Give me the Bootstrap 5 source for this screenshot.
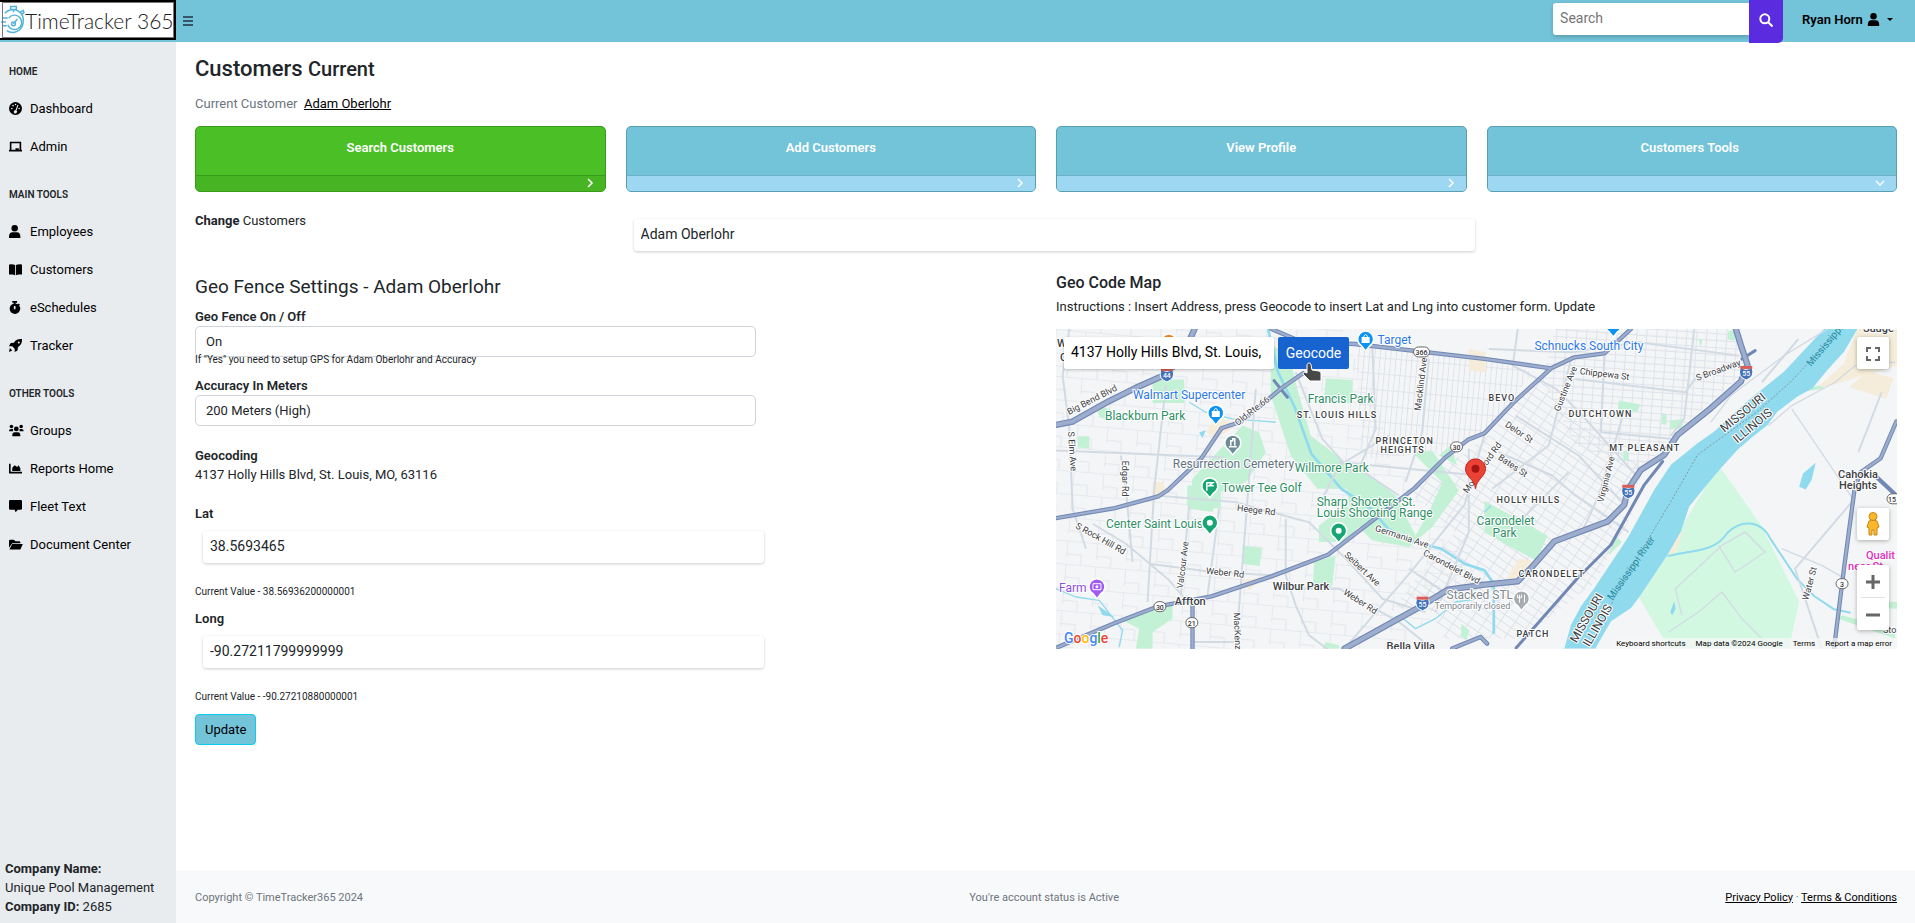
<!DOCTYPE html>
<html lang="en">
<head>
<meta charset="utf-8">
<meta name="viewport" content="width=device-width, initial-scale=1">
<title>TimeTracker 365 - Customers</title>
<link href="https://cdn.jsdelivr.net/npm/bootstrap@5.3.0/dist/css/bootstrap.min.css" rel="stylesheet">
<style>
:root{--sky:#73c3d9;--ink:#212529}
body{font-family:Roboto,"Liberation Sans",sans-serif;font-size:13px;line-height:19px;color:var(--ink);background:#fff}
.topbar{height:42px;background:var(--sky)}
.logo-box{width:176px;height:40px;border:2px solid #000;border-left:0;background:#fff;outline:1px solid #777;outline-offset:-3px;color:#222;font-family:Lato,sans-serif;font-weight:300;font-size:21px;padding-left:1px;white-space:nowrap}
.menu-btn{width:24px;color:#234}
.search-field{width:196px;height:32px;margin-top:3px;border:0;border-radius:3px 0 0 3px;font-size:14px;padding:0 7px 2px;box-shadow:0 2px 4px rgba(0,0,0,.2)}
.search-btn{width:34px;height:43px;border:0;border-radius:0 0 5px 0;background:#5b2be0;color:#fff}
.user-link{color:#000;font-weight:600;padding:0 22px 0 19px}
.side{width:176px;background:#e9ecef}
.side-head{font-size:10px;font-weight:600;padding:21px 9px 8px;line-height:18px}
.side a{height:38px;padding:0 9px;color:#000;gap:8px}
.side a svg,.user-link svg{fill:currentColor;width:13px;height:13px;overflow:visible}
.company{padding:0 5px 7px}
.page-main{padding:14px 18px 0 19px}
.page-main .row{--bs-gutter-x:20px}
h1{font-size:22px;line-height:26px;margin:0 0 12px}
h1 small{font-size:20px;font-weight:500}
h2{font-size:19px;line-height:23px;font-weight:400;margin:24px 0 9px}
h3{font-size:16px;line-height:20px;margin:22px 0 4px}
.tiles{margin-top:13px}
.tile{border:1px solid #589fb2;background:var(--sky);color:#fff;border-radius:5px;overflow:hidden}
.tile-top{height:48px;padding-top:11px;font-weight:600;text-align:center}
.tile-foot{height:16px;background:#9dd7f2;border-top:1px solid #6fafc8;padding:0 11px 2px 0}
.tile.go{background:#4bbf26;border-color:#399a1d}
.tile.go .tile-foot{background:#46b423;border-color:#399a1d}
.change-row{margin-top:19px}
.form-part{width:66.667%}
.flat-input{height:32px;width:100%;margin:8px 0 0 8px;border:0;border-radius:3px;background:#fff;color:var(--ink);padding:0 7px 2px;font-size:14px;box-shadow:0 1px 3px rgba(0,0,0,.2);appearance:none}
.pick{height:31px;font-size:13px;padding:0 10px;border-color:#ced4da;border-radius:5px;background-image:none;color:var(--ink)}
.hint{font-size:10px;line-height:15px;display:block}
.hint-tight{margin:-5px 0 9px}
.hint-after{margin:21px 0 10px}
.label-b{font-weight:600;display:block}
.btn-update{height:31px;font-size:13px;padding:0 9px;background:var(--sky);border:1px solid #0dcaf0;border-radius:4px;color:#000}
.foot{background:#f8f9fa;height:52px;padding:0 18px 0 19px;color:#6c757d;font-size:11px}
.foot a{color:#000}
.map-box{margin-top:13px;aspect-ratio:842/320;overflow:hidden;background:#f4f5f6}
.map-box>svg{width:100%;height:100%}
.map-search{left:8px;top:8px;gap:4px}
.map-search input{width:210px;height:32px;border:0;border-radius:2px;padding:0 7px 2px;font-size:14px;color:#000;background:#fff;box-shadow:0 1px 3px rgba(0,0,0,.24)}
.map-search button{width:71px;height:32px;border:0;border-radius:2px;background:#1763cf;color:#fff;font-size:14px;padding:0}
.cursor-hand{left:246px;top:33px}
.ctl{width:32px;background:#fff;border:0;border-radius:2px;box-shadow:0 1px 4px rgba(0,0,0,.3);right:8px;padding:0}
.ctl-full{top:8px;height:32px}
.ctl-man{top:179px;height:32px}
.ctl-zoom{top:236px;height:65px}
.ctl-zoom button{height:32px;border:0;background:none;padding:0}
.map-credit{right:0;bottom:0;height:11px;line-height:11px;font-size:8px;background:rgba(245,245,245,.75);color:#000;gap:10px;padding:0 5px}
.map-credit a{color:#000}
.lb{font:500 11px Roboto,sans-serif;fill:#3c4043;stroke:#fff;stroke-width:2px;paint-order:stroke;stroke-linejoin:round}
.park{fill:#2f8f66;font-weight:400;font-size:12px}
.shop{fill:#2b78e8;font-weight:400;font-size:12px}
.hood{font-size:9px;letter-spacing:1px}
.road{font-size:9px;font-weight:400}
.state-name{font-size:12px;font-weight:400}
.shield{font:500 7px Roboto,sans-serif;fill:#333;text-anchor:middle}
</style>
</head>
<body class="d-flex flex-column min-vh-100">
<header class="topbar d-flex">
  <a href="#" class="logo-box d-flex align-items-center text-decoration-none" aria-label="TimeTracker 365">
    <svg class="flex-shrink-0" width="24" height="30" viewBox="0 0 25 30" fill="none" stroke="#4fb3dc" stroke-width="1.500"><path d="M10 1h6v3h-6zM13 4v3M20 7l3-2 1 2-3 3M4 8A11 11 0 0 1 23 18M6 26a11 11 0 0 0 17-8M1 13h6M0 17h5M2 21h4"/><path d="M8 13a7.500 7.500 0 1 1-1 7M13 19l4-5" /><circle cx="13" cy="19" r="2"/></svg>
    <span>TimeTracker 365</span>
  </a>
  <button class="menu-btn btn p-0 border-0" type="button" aria-label="Menu"><svg class="d-block mx-auto" width="10" height="10" viewBox="0 0 10 10" stroke="currentColor" stroke-width="1.500"><path d="M0 1h10M0 5h10M0 9h10"/></svg></button>
  <form class="d-flex ms-auto">
    <input class="search-field" type="search" placeholder="Search" aria-label="Search">
    <button class="search-btn" type="button" aria-label="Search"><svg class="mb-1" width="14" height="14" viewBox="0 0 14 14" fill="none" stroke="#fff" stroke-width="2"><circle cx="5.800" cy="5.800" r="4.500"/><path d="M9 9l4.500 4.500"/></svg></button>
  </form>
  <a href="#" class="user-link dropdown-toggle d-flex align-items-center text-decoration-none pb-1"><span class="me-1">Ryan Horn</span>
    <svg class="me-1" viewBox="0 0 14 16"><circle cx="7" cy="4" r="4"/><path d="M0 16v-2c0-3 2-5 4-5h6c2 0 4 2 4 5v2z"/></svg></a>
</header>
<div class="d-flex flex-grow-1">
  <nav class="side d-flex flex-column flex-shrink-0">
    <div class="side-head">HOME</div>
    <a href="#" class="d-flex align-items-center text-decoration-none"><svg viewBox="0 0 16 16"><circle cx="8" cy="8" r="8"/><g fill="#e9ecef"><circle cx="3.500" cy="8" r="1"/><circle cx="5" cy="4.500" r="1"/><circle cx="12.500" cy="8" r="1"/><circle cx="8" cy="3" r="1"/><path d="M10.500 3.500l1.200.6-2.500 6.500a2 2 0 1 1-1.300-.5z"/></g></svg>Dashboard</a>
    <a href="#" class="d-flex align-items-center text-decoration-none"><svg viewBox="0 0 16 16"><path d="M1 2h14v10h1v2H0v-2h1zm2 2v8h5v-2h4v2h1V4z"/></svg>Admin</a>
    <div class="side-head">MAIN TOOLS</div>
    <a href="#" class="d-flex align-items-center text-decoration-none"><svg viewBox="0 0 16 16"><circle cx="7" cy="4" r="4"/><path d="M0 16v-2c0-3 2-5 4-5h6c2 0 4 2 4 5v2z"/></svg>Employees</a>
    <a href="#" class="d-flex align-items-center text-decoration-none"><svg viewBox="0 0 16 16"><path d="M0 2c3-1 5-.5 7.500.5V15C5 14 3 14 0 14zM16 2c-3-1-5-.5-7.500.5V15c2.500-1 4.500-1 7.500-1z"/></svg>Customers</a>
    <a href="#" class="d-flex align-items-center text-decoration-none"><svg viewBox="0 0 16 16"><path fill-rule="evenodd" d="M4 0h6v2H8v1l3 1 1-1 1.500 1.500-1 1A6.500 6.500 0 1 1 6 3V2H4zm2 6v4h2V6z"/></svg>eSchedules</a>
    <a href="#" class="d-flex align-items-center text-decoration-none"><svg viewBox="0 0 16 16"><path fill-rule="evenodd" d="M16 0c0 5-1 7-5 10l-.5 4L7 16v-4L4 9H0l2-4 4-.5C9 0 12-.3 16 0zm-4 3a1.200 1.200 0 1 0 .1 0zM1 11l3 3-4 2z"/></svg>Tracker</a>
    <div class="side-head">OTHER TOOLS</div>
    <a href="#" class="d-flex align-items-center text-decoration-none"><svg viewBox="0 0 16 16"><circle cx="3" cy="3" r="2.200"/><circle cx="15" cy="3" r="2.200"/><circle cx="9" cy="6" r="3"/><path d="M0 9c0-2 1-3 3-3h2v3zM18 9c0-2-1-3-3-3h-2v3zM4 15c0-4 1-5 3-5h4c2 0 3 1 3 5z"/></svg>Groups</a>
    <a href="#" class="d-flex align-items-center text-decoration-none"><svg viewBox="0 0 16 16"><path d="M0 2h2v10h14v2H0zM4 7l3-3 3 2 2-2 2 4v3H4z"/></svg>Reports Home</a>
    <a href="#" class="d-flex align-items-center text-decoration-none"><svg viewBox="0 0 16 16"><path d="M1 0h14l1 1v10l-1 1h-4l-3 3-1-3H1l-1-1V1z"/></svg>Fleet Text</a>
    <a href="#" class="d-flex align-items-center text-decoration-none"><svg viewBox="0 0 16 16"><path d="M0 3l1-1h5l2 2h5l1 1v1.500H4L0 12zM4 7.500h13L14 14H.5z"/></svg>Document Center</a>
    <div class="company mt-auto"><b>Company Name:</b><br>Unique Pool Management<br><b>Company ID:</b> 2685</div>
  </nav>
  <div class="d-flex flex-column flex-grow-1">
    <main class="page-main flex-grow-1">
      <h1>Customers <small>Current</small></h1>
      <div><span class="text-secondary">Current Customer</span>&nbsp; <a href="#" class="text-black">Adam Oberlohr</a></div>
      <div class="row tiles">
        <div class="col-3"><div class="tile go"><div class="tile-top">Search Customers</div><div class="tile-foot d-flex justify-content-end align-items-center"><svg width="10" height="10" viewBox="0 0 10 10" fill="none" stroke="#fff" stroke-width="1.500"><path d="M4 1l4 4-4 4"/></svg></div></div></div>
        <div class="col-3"><div class="tile"><div class="tile-top">Add Customers</div><div class="tile-foot d-flex justify-content-end align-items-center"><svg width="10" height="10" viewBox="0 0 10 10" fill="none" stroke="#fff" stroke-width="1.500"><path d="M4 1l4 4-4 4"/></svg></div></div></div>
        <div class="col-3"><div class="tile"><div class="tile-top">View Profile</div><div class="tile-foot d-flex justify-content-end align-items-center"><svg width="10" height="10" viewBox="0 0 10 10" fill="none" stroke="#fff" stroke-width="1.500"><path d="M4 1l4 4-4 4"/></svg></div></div></div>
        <div class="col-3"><div class="tile"><div class="tile-top pe-1">Customers Tools</div><div class="tile-foot d-flex justify-content-end align-items-center"><svg width="10" height="10" viewBox="0 0 10 10" fill="none" stroke="#fff" stroke-width="1.500"><path d="M1 3l4 4 4-4"/></svg></div></div></div>
      </div>
      <div class="row change-row">
        <label class="col-3" for="cust"><b>Change</b> Customers</label>
        <div class="col-6"><input id="cust" class="flat-input" value="Adam Oberlohr"></div>
      </div>
      <div class="row">
        <div class="col-6">
          <h2>Geo Fence Settings - Adam Oberlohr</h2>
          <div class="form-part">
            <label class="label-b" for="fence">Geo Fence On / Off</label>
            <select id="fence" class="form-select pick"><option>On</option><option>Off</option></select>
            <small class="hint hint-tight">If "Yes" you need to setup GPS for Adam Oberlohr and Accuracy</small>
            <label class="label-b" for="acc">Accuracy In Meters</label>
            <select id="acc" class="form-select pick"><option>200 Meters (High)</option></select>
            <div class="label-b mt-3 pt-1">Geocoding</div>
            <div>4137 Holly Hills Blvd, St. Louis, MO, 63116</div>
            <label class="label-b mt-3 pt-1" for="lat">Lat</label>
            <input id="lat" class="flat-input" value="38.5693465">
            <small class="hint hint-after">Current Value - 38.56936200000001</small>
            <label class="label-b" for="lng">Long</label>
            <input id="lng" class="flat-input" value="-90.27211799999999">
            <small class="hint hint-after">Current Value - -90.27210880000001</small>
            <button class="btn-update" type="button">Update</button>
          </div>
        </div>
        <div class="col-6">
          <h3>Geo Code Map</h3>
          <div>Instructions : Insert Address, press Geocode to insert Lat and Lng into customer form. Update</div>
          <div class="map-box position-relative">
            <svg viewBox="0 0 842 320" preserveAspectRatio="xMidYMid slice" role="img" aria-label="Map of south St. Louis">
              <defs>
                <pattern id="gridA" width="60" height="42" patternUnits="userSpaceOnUse" patternTransform="rotate(4)"><path d="M0 1h60M0 22h60M1 0v42M31 0v42" stroke="#dbe1e9" stroke-width="3"/></pattern>
                <pattern id="gridB" width="38" height="22" patternUnits="userSpaceOnUse" patternTransform="rotate(34)"><path d="M0 1h38M1 0v22" stroke="#dbe1e9" stroke-width="3"/></pattern>
                <pattern id="gridC" width="16" height="48" patternUnits="userSpaceOnUse" patternTransform="rotate(5)"><path d="M0 1h16M1 0v48" stroke="#dbe1e9" stroke-width="3"/></pattern>
                <pattern id="gridD" width="90" height="70" patternUnits="userSpaceOnUse" patternTransform="rotate(5)"><path d="M0 1h90M1 0v50M45 40v30M0 40h45" stroke="#e1e6ed" stroke-width="3" fill="none"/></pattern>
                <g id="i55"><path d="M-6-4q6 3 12 0 3 9-6 12-9-3-6-12z" fill="#4272b8" stroke="#fff"/><path d="M-6-6h12v3h-12z" fill="#d85c57"/></g>
                <path id="pin" d="M0 12l-4-5A8 8 0 1 1 4 7z" stroke="#fff" stroke-width="1.500"/>
              </defs>
              <g transform="scale(.33333)" fill="none" stroke-linejoin="round">
                <path fill="#f4f5f6" d="M0 0h2526v960H0z"/>
                <path fill="url(#gridD)" d="M0 0h860l200 470 230 250-260 240H0z"/>
                <path fill="url(#gridC)" d="M900 40l390 50 140 40-130 180-110 60-270 20z"/>
                <path fill="url(#gridA)" d="M1500 0h560l10 130-230 200-80 100-200-80-100-200z"/>
                <path fill="url(#gridB)" d="M1300 320l150-180 120 140 200 140-60 120-240 120-90 100-380 90 200-240-140-120z"/>
                <path fill="url(#gridB)" d="M1500 650l180-70 60-40-120 220-220 170h-230l-80-150 330-30z"/>
                <g fill="#f5ecd9"><path d="M2407 0h119v110l-250 75 90-80zM2437 128l78 20-22 62-110-36z"/><path d="M1240 60l50 10v60l-50-5zM480 260l60 30-60 40-28-20zM290 460h35v40l-35 8zM1390 690l60 10-50 50-50 5zM930 560l60-20-10 30-40 30zM560 755l70-10-50 40z"/></g>
                <g fill="#c3f1d5">
                  <path d="M290 152h95v70h-95zM810 148l80 5v72l-85-15zM120 225l50 20-10 30-30-10zM65 322h35v38l-35-5zM645 40l60 60 20 80 40 140 90 70 50 90h-120l-80-100-60-180zM560 290l50 20 20 60-60 90-80 30-20 60-70-10 10-90zM860 410l70 20 90 70 60 120 40-70 40-90-90-90 60-5 80 120-80 110-70 60-110-20-60-60zM395 470h100v70l-102-10zM560 650l58 8-6 54-50-6zM790 590l80-60 60 40-60 70h-80zM775 700l65-20-10 90-30 20-28-20zM350 820v50l-60 40v50h-50l10-60-60 -30 90-20zM810 940l40 10v10h-50zM1217 885l25 20-10 30-15-10zM1150 380l35-30 20 60z"/>
                  <path d="M1287 516l190 105-35 75-155-85zM1690 215l65 12-8 22-60-5zM1844 275l38-5v30l-38-2zM1705 365l14 2v30l-16-4zM1930 30l12 2-6 22zM2020 5h20v30l-24-4zM1820 252l14 5v30h-15zM1680 620l20 20-40 40z"/>
                  <path d="M2230 190l60-20 20 8-60 10zM2360 860l160 40v30l-170-60zM2420 815l106 5v20l-100-3z"/>
                </g>
                <path fill="#d3f8e2" d="M1997 418l35 50 85 120 115 230-30 142h-360l-90-152 85-130 40-80 78-130z"/>
                <path fill="#f5ecd9" d="M1832 680l40-75 10 5-20 60z"/>
                <path fill="#90daee" d="M2307 0L2187 128l-100 80-110 100-50 35-80 65-50 75-80 145-100 150-40 55-30 55-20 72h93l47-82 60-40 30-40 40-60 40-60 40-70 25-75 53-65 42-50 50-55 40-35 50-40 30-40 60-45 45-25 45-55 50-55 40-68zM2282 402l-12 50-18 30-20-8 12-40zM1857 818l4 22-10 20-6-10zM430 310l20 -6-10 24zM125 830l50 35-35-5z"/>
                <path stroke="#777" stroke-width="2" stroke-dasharray="6 5" d="M2337 20L2207 158l-100 90-180 130-80 140-150 250-90 180"/>
                <g stroke="#90daee" stroke-width="8"><path d="M637 0l30 130 50 105 50 140 90 105 90 60 50 60 60 35 100 25 70 45 60 20 28 40v150"/><path stroke-width="4" d="M400 220l50 30 80 20 130 10M0 780l60 25 70 10 70 90-10 50M1287 550l20-20M970 900l60-40 50 40 60-30 60-50 70-10"/><path stroke-width="6" d="M1837 682c80-20 140-10 180-70 40-40 100-40 130 20l80 120 50 50 60 40 50 10"/></g>
                <g stroke="#d2dbe4" stroke-width="6">
                  <path d="M40 0L20 140l20 160 10 240 40 120M195 380l15 100 20 220M330 170l-35 310-20 340M0 365l500 20M110 585l100 60 130 110 60 70M280 705l190 25 180 10M400 530l-25 270M490 540l-35 260M600 180l-30 400-30 380M300 500l240 20 180 50 40 10 120 120 100 110 130 40M690 570v170l30 90 40 90 80 60M720 780l130 0 180 100 100 80M1000 320l-150 90-60 120M950 50l10 250-50 120 120 80M1120 90l-20 220-50 150M720 130l80 200 90 100M410 940h130M1287 318l-60 210-160 200-190 220M850 400l420 40M1060 720l120 80M1240 360v250l-100 240"/>
                  <path d="M1387 0l-15 110 130 70 70 70 180 200M1550 80l-70 270-170 130M1647 80l-10 230 210 20M1917 0l-30 270-40 50M1330 370l160 70 70 60 160 110M1380 260l190 120 130 140M1700 270l-70 230-50 110M1540 430l-180 180M1300 60l250 10 200-30 300 40M1560 150l330 40 30-40 150-60M2480 190l-70 180M2390 520l-170 200 80 240M2120 160l110-130"/>
                  <path stroke-width="4" d="M1967 280l60-80 160-120 130-80M2140 290l70-60 130-70 60-50 120-10M2210 240l190 280M1880 860l-20-80 140-130 70-40 60 60-90 60-50-80M1840 910l90-60 70-60 60 80 70 70M2180 660l120 50 70 40"/>
                </g>
                <g stroke="#7187b4" stroke-linecap="round">
                  <path stroke-width="13" d="M647 0l90 38 160 7 390 45 200 28M742 133l-65 45-120 100-60 20-60 90-100 95-30 20-130 35L0 568M0 958l177-75 130-50 160-30 180-60 170-65 130-100 130-100 90-90 70-55 50-20 90-95 110-100 70-33 90-12L1727 0M410 828v132M2524 278l-47 110-60 42-18 48-32 240-30 240M2460 440l64 60M1190 960l85-35 20 20"/>
                  <path stroke-width="19" d="M0 288l50-10 107-60 80-40 90-40 50-50 40-90M2042 0l15 48 20 60-20 50-90 80-100 80-40 60-70 45-40 60-10 45-50 50-160 60-70 80-40 40-100 10-110 15-90 55-220 122"/>
                  <path stroke-width="9" d="M1822 398l-55 70-100 180-100 100-185 210M655 155l40 50M2060 90l40-25"/>
                </g>
                <g stroke="#9cadce" stroke-linecap="round">
                  <path stroke-width="7" d="M647 0l90 38 160 7 390 45 200 28M742 133l-65 45-120 100-60 20-60 90-100 95-30 20-130 35L0 568M0 958l177-75 130-50 160-30 180-60 170-65 130-100 130-100 90-90 70-55 50-20 90-95 110-100 70-33 90-12L1727 0M410 828v132M2524 278l-47 110-60 42-18 48-32 240-30 240M1190 960l85-35 20 20"/>
                  <path stroke-width="12" d="M0 288l50-10 107-60 80-40 90-40 50-50 40-90M2042 0l15 48 20 60-20 50-90 80-100 80-40 60-70 45-40 60-10 45-50 50-160 60-70 80-40 40-100 10-110 15-90 55-220 122"/>
                </g>
              </g>
              <g class="lb">
                <g class="park"><text x="49" y="91">Blackburn Park</text><text x="252" y="74">Francis Park</text><text x="239" y="143">Willmore Park</text><text x="166" y="163">Tower Tee Golf</text><text x="50" y="199">Center Saint Louis</text><text x="261" y="177">Sharp Shooters St.</text><text x="261" y="188">Louis Shooting Range</text><text x="421" y="196">Carondelet</text><text x="437" y="208">Park</text></g>
                <g class="shop"><text x="77" y="70">Walmart Supercenter</text><text x="322" y="15">Target</text><text x="479" y="21">Schnucks South City</text></g>
                <g class="shop"><text x="117" y="139" fill="#5f7482">Resurrection Cemetery</text><text x="391" y="270" fill="#80868b">Stacked STL</text><text class="road" x="379" y="280" fill="#80868b">Temporarily closed</text><text x="3" y="263" fill="#8e4fe0">Farm</text></g>
                <g fill="#e02fc0"><text x="811" y="230">Qualit</text><text x="793" y="241">near St.</text></g>
                <g class="hood"><text x="241" y="89">ST. LOUIS HILLS</text><text x="320" y="115">PRINCETON</text><text x="325" y="124">HEIGHTS</text><text x="433" y="72">BEVO</text><text x="513" y="88">DUTCHTOWN</text><text x="554" y="122">MT PLEASANT</text><text x="441" y="174">HOLLY HILLS</text><text x="463" y="248">CARONDELET</text><text x="461" y="308">PATCH</text></g>
                <text x="217" y="261">Wilbur Park</text><text x="119" y="276">Affton</text><text x="331" y="321">Bella Villa</text><text x="783" y="149">Cahokia</text><text x="784" y="160">Heights</text><text x="808" y="3">Sauge</text><text x="1" y="18">W</text><text x="4" y="32">C</text>
                <g class="road">
                  <text transform="translate(13 86) rotate(-27)">Big Bend Blvd</text><text transform="translate(12 103) rotate(86)">S Elm Ave</text><text transform="translate(66 132) rotate(90)">Edgar Rd</text><text transform="translate(182 97) rotate(-38)">Old Rte 66</text><text transform="translate(365 82) rotate(-83)">Macklind Ave</text><text transform="translate(19 199) rotate(29)">S Rock Hill Rd</text><text transform="translate(181 182) rotate(7)">Heege Rd</text><text transform="translate(127 260) rotate(-83)">Valcour Ave</text><text transform="translate(150 245) rotate(6)">Weber Rd</text><text transform="translate(178 284) rotate(88)">MacKenz</text><text transform="translate(319 202) rotate(18)">Germania Ave</text><text transform="translate(288 227) rotate(43)">Seibert Ave</text><text transform="translate(367 226) rotate(28)">Carondelet Blvd</text><text transform="translate(287 265) rotate(33)">Weber Rd</text><text transform="translate(412 165) rotate(-55)">Morganford Rd</text>
                  <text transform="translate(504 83) rotate(-68)">Gustine Ave</text><text transform="translate(524 45) rotate(7)">Chippewa St</text><text transform="translate(642 52) rotate(-20)">S Broadway</text><text transform="translate(449 97) rotate(34)">Delor St</text><text transform="translate(442 130) rotate(34)">Bates St</text><text transform="translate(548 174) rotate(-76)">Virginia Ave</text><text transform="translate(753 272) rotate(-75)">Water St</text><text x="828" y="304">Sto</text>
                </g>
                <g class="state-name"><text transform="translate(669 104) rotate(-39)">MISSOURI</text><text transform="translate(682 115) rotate(-40)">ILLINOIS</text><text transform="translate(521 315) rotate(-60)">MISSOURI</text><text transform="translate(534 319) rotate(-60)">ILLINOIS</text></g>
              </g>
              <g font-family="Roboto" font-size="10" fill="#238aa0"><text transform="translate(756 38) rotate(-50)">Mississippi</text><text transform="translate(557 272) rotate(-55)">Mississippi River</text></g>
              <g fill="#fff" stroke="#666"><rect x="358" y="18" width="16" height="10" rx="5"/><rect x="395" y="113" width="12" height="10" rx="5"/><rect x="98" y="273" width="12" height="10" rx="5"/><rect x="130" y="289" width="12" height="10" rx="5"/><rect x="781" y="250" width="12" height="10" rx="5"/><rect x="832" y="165" width="16" height="10" rx="5"/></g>
              <g class="shield"><text x="366" y="26">366</text><text x="401" y="121">30</text><text x="104" y="281">30</text><text x="136" y="297">21</text><text x="787" y="258">3</text><text x="837" y="173">15</text></g>
              <use href="#i55" x="111" y="45"/><use href="#i55" x="691" y="43"/><use href="#i55" x="573" y="162"/><use href="#i55" x="367" y="274"/>
              <g class="shield" style="fill:#fff"><text x="111" y="49">44</text><text x="691" y="47">55</text><text x="573" y="166">55</text><text x="367" y="278">55</text></g>
              <use href="#pin" x="113" y="13" fill="#f5811f"/>
              <g fill="#0a93f5"><use href="#pin" x="310" y="10"/><use href="#pin" x="160" y="84"/><use href="#pin" x="558" y="-4"/></g>
              <g fill="#fff"><path d="M306 8h8v6h-8zM156 82h8v6h-8z"/><path fill="none" stroke="#fff" d="M308 8q2-5 4 0M158 82q2-5 4 0"/></g>
              <use href="#pin" x="177" y="114" fill="#6e8b98"/><path d="M173 118h8M175 117v-5h2v-2h2v7" stroke="#fff" fill="none" stroke-width="1.500"/>
              <g fill="#17a673"><use href="#pin" x="154" y="157"/><use href="#pin" x="154" y="194"/><use href="#pin" x="283" y="202"/></g>
              <path d="M151 162v-8h6l-4 3h5" stroke="#fff" fill="none" stroke-width="1.500"/>
              <circle cx="154" cy="194" r="3" fill="#fff"/><circle cx="283" cy="202" r="3" fill="#fff"/>
              <use href="#pin" x="41" y="258" fill="#a05cf0"/><path d="M37 255h8v6h-8z" fill="none" stroke="#fff"/><circle cx="41" cy="258" r="1.500" fill="#fff"/>
              <use href="#pin" x="466" y="270" fill="#a8acb0"/><path d="M464 266v8M462 266v3h4v-3M469 266v8" stroke="#fff" fill="none"/>
              <path d="M420 160c-1-10-10-12-10-20a10 10 0 0 1 20 0c0 8-9 10-10 20z" fill="#ea4335" stroke="#c5221f"/><circle cx="420" cy="140" r="4" fill="#a31512"/>
              <text x="8" y="314" font-family="Roboto" font-size="14" font-weight="500" stroke="#fff" stroke-width="2" paint-order="stroke"><tspan fill="#4285f4">G</tspan><tspan fill="#ea4335">o</tspan><tspan fill="#fbbc04">o</tspan><tspan fill="#4285f4">g</tspan><tspan fill="#34a853">l</tspan><tspan fill="#ea4335">e</tspan></text>
            </svg>
            <div class="map-search position-absolute d-flex"><input value="4137 Holly Hills Blvd, St. Louis, " aria-label="Address"><button type="button">Geocode</button></div>
            <svg class="cursor-hand position-absolute" style="width:20px;height:21px" viewBox="0 0 20 21"><path d="M7 1c1.500 0 2 1 2 2l1 5 7 1c2 1 2 2 2 4v6H8l-7-7c0-2 2-2 4-1L5 3c0-1 1-2 2-2z" fill="#484848" stroke="#fff"/></svg>
            <button class="ctl ctl-full position-absolute" type="button" aria-label="Full screen"><svg width="14" height="14" viewBox="0 0 14 14" fill="none" stroke="#666" stroke-width="2"><path d="M1 5V1h4M9 1h4v4M13 9v4H9M5 13H1V9"/></svg></button>
            <button class="ctl ctl-man position-absolute" type="button" aria-label="Street View"><svg width="14" height="24" viewBox="0 0 14 24" fill="#fbb829" stroke="#c88518"><path d="M3 9q4-2 8 0l2 6-2 1v7H8v-5H6v5H3v-7l-2-1z"/><circle cx="7" cy="4.500" r="4"/></svg></button>
            <div class="ctl ctl-zoom position-absolute d-flex flex-column"><button type="button" aria-label="Zoom in"><svg width="14" height="14" viewBox="0 0 14 14" stroke="#666" stroke-width="3"><path d="M0 7h14M7 0v14"/></svg></button><span class="border-top mx-1"></span><button type="button" aria-label="Zoom out"><svg width="14" height="14" viewBox="0 0 14 14" stroke="#666" stroke-width="3"><path d="M0 7h14"/></svg></button></div>
            <div class="map-credit position-absolute d-flex"><a href="#" class="text-decoration-none">Keyboard shortcuts</a><span>Map data ©2024 Google</span><a href="#" class="text-decoration-none">Terms</a><a href="#" class="text-decoration-none">Report a map error</a></div>
          </div>
        </div>
      </div>
    </main>
    <footer class="foot d-flex justify-content-between align-items-center">
      <span>Copyright © TimeTracker365 2024</span><span>You're account status is Active</span><span><a href="#">Privacy Policy</a> · <a href="#">Terms &amp; Conditions</a></span>
    </footer>
  </div>
</div>
<script src="https://cdn.jsdelivr.net/npm/bootstrap@5.3.0/dist/js/bootstrap.bundle.min.js"></script>
</body>
</html>
